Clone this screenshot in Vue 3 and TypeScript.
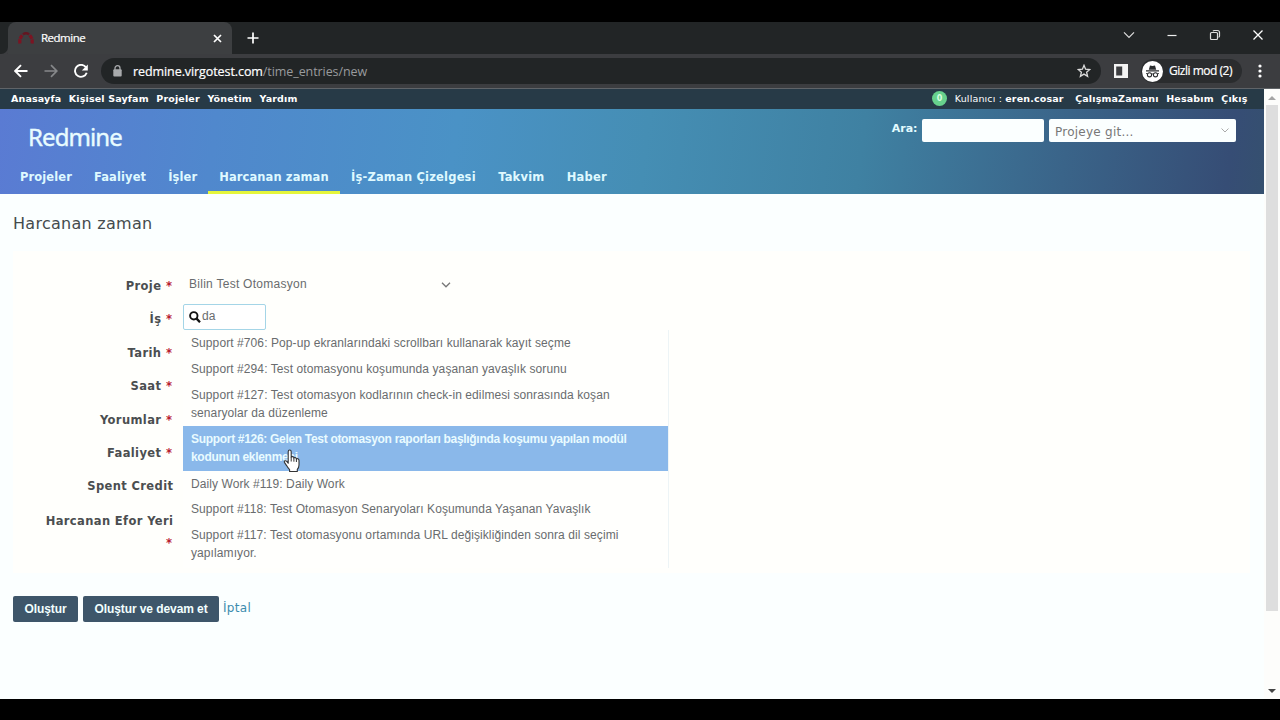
<script setup lang="ts">
interface FormRow {
  label: string
  required: boolean
}

interface Issue {
  id: string
  lines: string[]
  active?: boolean
}

const accountLinks: string[] = ['Anasayfa', 'Kişisel Sayfam', 'Projeler', 'Yönetim', 'Yardım']
const userLinks: string[] = ['ÇalışmaZamanı', 'Hesabım', 'Çıkış']

const tabs: string[] = ['Projeler', 'Faaliyet', 'İşler', 'Harcanan zaman', 'İş-Zaman Çizelgesi', 'Takvim', 'Haber']
const currentTab = 'Harcanan zaman'

const rows: FormRow[] = [
  { label: 'Proje', required: true },
  { label: 'İş', required: true },
  { label: 'Tarih', required: true },
  { label: 'Saat', required: true },
  { label: 'Yorumlar', required: true },
  { label: 'Faaliyet', required: true },
  { label: 'Spent Credit', required: false },
  { label: 'Harcanan Efor Yeri', required: true },
]

const issues: Issue[] = [
  { id: '706', lines: ['Support #706: Pop-up ekranlarındaki scrollbarı kullanarak kayıt seçme'] },
  { id: '294', lines: ['Support #294: Test otomasyonu koşumunda yaşanan yavaşlık sorunu'] },
  { id: '127', lines: ['Support #127: Test otomasyon kodlarının check-in edilmesi sonrasında koşan', 'senaryolar da düzenleme'] },
  { id: '126', lines: ['Support #126: Gelen Test otomasyon raporları başlığında koşumu yapılan modül', 'kodunun eklenmesi'], active: true },
  { id: '119', lines: ['Daily Work #119: Daily Work'] },
  { id: '118', lines: ['Support #118: Test Otomasyon Senaryoları Koşumunda Yaşanan Yavaşlık'] },
  { id: '117', lines: ['Support #117: Test otomasyonu ortamında URL değişikliğinden sonra dil seçimi', 'yapılamıyor.'] },
]
</script>

<template>
  <div class="screen">
    <div class="tabstrip">
      <div class="edge"></div>
      <div class="browser-tab">
        <svg class="favicon" width="16" height="14" viewBox="0 0 16 14">
          <path d="M2 12.5Q1 7 5 3.5M14 12.5Q15 7 11 3.5" fill="none" stroke="#7c1422" stroke-width="3.2" stroke-dasharray="4 .8" />
          <path d="M5 3.3Q8 1.4 11 3.3" fill="none" stroke="#641520" stroke-width="2.5" />
        </svg>
        <span class="tab-title">Redmine</span>
        <svg class="tab-close" width="9" height="9" viewBox="0 0 9 9"><path d="M1 1l7 7M8 1l-7 7" stroke="#fff" stroke-width="1.7" /></svg>
      </div>
      <svg class="new-tab" width="12" height="12" viewBox="0 0 12 12"><path d="M6 .5v11M.5 6h11" stroke="#fff" stroke-width="1.7" /></svg>
      <div class="window-buttons">
        <svg width="12" height="12" viewBox="0 0 12 12"><path d="M1 3.3l5 5 5-5" fill="none" stroke="#ddd" stroke-width="1.2" /></svg>
        <svg width="12" height="12" viewBox="0 0 12 12"><path d="M1.5 6.5h9" stroke="#eee" stroke-width="1.2" /></svg>
        <svg width="12" height="12" viewBox="0 0 12 12"><rect x="1.5" y="3.5" width="7" height="7" rx="1" fill="none" stroke="#ddd" stroke-width="1.2" /><path d="M4 2.2Q4.3 1.5 5.3 1.5H8.5Q10.5 1.5 10.5 3.5V7Q10.5 8 9.5 8.3" fill="none" stroke="#ddd" stroke-width="1.2" /></svg>
        <svg width="12" height="12" viewBox="0 0 12 12"><path d="M1.5 1.5l9 9M10.5 1.5l-9 9" stroke="#fff" stroke-width="1.3" /></svg>
      </div>
    </div>

    <div class="toolbar">
      <svg class="nav" width="14" height="14" viewBox="0 0 14 14"><path d="M13.5 7H1.5M7 1.2L1.2 7 7 12.8" fill="none" stroke="#fff" stroke-width="1.9" /></svg>
      <svg class="nav" width="14" height="14" viewBox="0 0 14 14"><path d="M.5 7h12M7 1.2L12.8 7 7 12.8" fill="none" stroke="#86888a" stroke-width="1.7" /></svg>
      <svg class="nav" width="14" height="14" viewBox="0 0 14 14"><path d="M11.8 3.2A6 6 0 1 0 12.7 8.8" fill="none" stroke="#fff" stroke-width="1.9" /><path d="M13.8.4v6H7.8z" fill="#fff" /></svg>
      <div class="omnibox">
        <svg width="9" height="12" viewBox="0 0 9 12"><path d="M2 5V3.2a2.5 2.5 0 0 1 5 0V5" fill="none" stroke="#a8aaac" stroke-width="1.3" /><rect x=".3" y="4.3" width="8.4" height="7.2" rx="1" fill="#a8aaac" /></svg>
        <span class="url"><span class="host">redmine.virgotest.com</span><span class="path">/time_entries/new</span></span>
        <svg class="star" width="14" height="14" viewBox="0 0 14 14"><path d="M7 1.3l1.6 3.9 4.2.3-3.2 2.7 1 4.1L7 10.1l-3.6 2.2 1-4.1L1.2 5.5l4.2-.3z" fill="none" stroke="#ddd" stroke-width="1.3" /></svg>
      </div>
      <svg class="panel" width="14" height="14" viewBox="0 0 14 14"><path d="M0 0h14v14H0zM2.2 2.5v9h6v-9z" fill="#f4f4f4" fill-rule="evenodd" /></svg>
      <div class="profile">
        <svg width="21" height="21" viewBox="0 0 21 21">
          <circle cx="10.5" cy="10.5" r="10.5" fill="#fff" />
          <path d="M6.8 8.7L8 4.5q2.5.8 5 0l1.2 4.2zM4 9.3h13v1.2H4z" fill="#2b2d2f" />
          <circle cx="7.5" cy="13.8" r="2.1" fill="none" stroke="#2b2d2f" stroke-width="1.1" /><circle cx="13.5" cy="13.8" r="2.1" fill="none" stroke="#2b2d2f" stroke-width="1.1" />
          <path d="M9.5 13.2q1-.6 2 0M4.2 12.5h1M15.8 12.5h1" fill="none" stroke="#2b2d2f" />
        </svg>
        <span>Gizli mod (2)</span>
      </div>
      <svg class="kebab" width="4" height="14" viewBox="0 0 4 14" fill="#fff"><circle cx="2" cy="2" r="1.6" /><circle cx="2" cy="7" r="1.6" /><circle cx="2" cy="12" r="1.6" /></svg>
    </div>

    <div class="viewport">
      <main class="page">
        <div class="top-menu">
          <a v-for="link in accountLinks" :key="link">{{ link }}</a>
          <div class="account">
            <span class="bubble">0</span>
            <span class="logged">Kullanıcı : <b>eren.cosar</b></span>
            <a v-for="link in userLinks" :key="link">{{ link }}</a>
          </div>
        </div>

        <header class="header">
          <div class="header-row">
            <h1>Redmine</h1>
            <div class="search">
              <label>Ara:</label>
              <div class="search-box"></div>
              <div class="jump"><span>Projeye git...</span>
                <svg width="8" height="5" viewBox="0 0 8 5"><path d="M.5.5L4 4 7.5.5" fill="none" stroke="#aaa" /></svg>
              </div>
            </div>
          </div>
          <nav>
            <a v-for="tab in tabs" :key="tab" :class="{ selected: tab === currentTab }"><span>{{ tab }}</span></a>
          </nav>
        </header>

        <section class="content">
          <h2>Harcanan zaman</h2>
          <div class="box">
            <div class="labels">
              <div v-for="row in rows" :key="row.label" class="label-row">
                <span class="caption">{{ row.label }}</span><span v-if="row.required" class="required">*</span>
              </div>
            </div>
            <div class="fields">
              <div class="project"><span>Bilin Test Otomasyon</span>
                <svg width="10" height="6" viewBox="0 0 10 6"><path d="M1 .8l4 4 4-4" fill="none" stroke="#777" stroke-width="1.3" /></svg>
              </div>
              <div class="issue-input">
                <svg width="12" height="12" viewBox="0 0 12 12"><circle cx="4.8" cy="4.8" r="3.7" fill="none" stroke="#111" stroke-width="1.9" /><path d="M7.4 7.4l3.6 3.8" stroke="#111" stroke-width="2.3" /></svg>
                <span>da</span>
              </div>
              <ul class="suggestions">
                <li v-for="issue in issues" :key="issue.id" :class="{ active: issue.active }">
                  <div v-for="line in issue.lines" :key="line">{{ line }}</div>
                </li>
              </ul>
              <svg class="pointer" width="18" height="24" viewBox="0 0 18 24">
                <path d="M5.2 14.2V2.8Q5.2 1 6.7 1T8.2 2.8V8.5Q8.4 7.5 9.6 7.6 10.9 7.8 10.9 9.1 11.2 8.4 12.3 8.6 13.4 8.8 13.4 10 13.9 9.4 14.9 9.7 16 10.1 16 11.4V16Q16 18.7 14.3 20.3V22.5H6.6V20.7Q4.8 18.8 3.6 16.6L1.6 13.6Q.9 12.3 1.9 11.8 2.9 11.4 3.8 12.4z" fill="#fff" stroke="#333" stroke-width="1.1" stroke-linejoin="round" />
                <path d="M8.2 8.5v4M10.9 9.1v3.6M13.4 10v3" stroke="#333" stroke-width="1" />
              </svg>
            </div>
          </div>
          <div class="actions">
            <button class="create">Oluştur</button>
            <button class="continue">Oluştur ve devam et</button>
            <a>İptal</a>
          </div>
        </section>
      </main>
      <aside class="scrollbar">
        <svg width="8" height="4" viewBox="0 0 8 4"><path d="M0 4l4-4 4 4z" fill="#a5a5a5" /></svg>
        <div class="thumb"></div>
        <svg class="down" width="8" height="4" viewBox="0 0 8 4"><path d="M0 0h8L4 4z" fill="#444" /></svg>
      </aside>
    </div>
  </div>
</template>

<style>
body {
  margin: 0;
  background: #000;
}
</style>

<style scoped>
* { box-sizing: border-box; }
svg { display: block; flex: none; }
.screen {
  width: 1280px;
  height: 720px;
  padding: 22px 0 21px;
  background: #000;
  display: flex;
  flex-direction: column;
  overflow: hidden;
  white-space: nowrap;
  font-family: "DejaVu Sans", Verdana, sans-serif;
}
.tabstrip {
  height: 32px;
  flex: none;
  background: #222526;
  display: flex;
  align-items: center;
  color: #fff;
}
.edge { width: 8px; height: 32px; border-bottom-right-radius: 7px; background: #222526; box-shadow: 0 6px 0 #3c3d40; }
.browser-tab {
  width: 224px;
  height: 32px;
  border-radius: 8px 8px 0 0;
  background: #3d3f41;
  display: flex;
  align-items: center;
  padding: 0 10px 0 10px;
}
.tab-title { font: 11.5px/16px "Open Sans", sans-serif; margin-left: 7px; letter-spacing: -.5px; -webkit-text-stroke: .2px; }
.tab-close { margin-left: auto; }
.new-tab { margin-left: 15px; }
.window-buttons { margin-left: auto; display: flex; gap: 31px; padding: 0 16px 6px 0; }
.toolbar {
  height: 35px;
  flex: none;
  background: #3c3d40;
  border-bottom: 1px solid #606468;
  display: flex;
  align-items: center;
  padding: 0 0 0 14px;
}
.nav { margin-right: 16px; }
.omnibox {
  width: 1000px;
  height: 26px;
  margin-left: -3px;
  border-radius: 13px;
  background: #222526;
  display: flex;
  align-items: center;
  padding: 0 10px 0 12px;
}
.url { margin-left: 11px; font: 12.5px/20px "Open Sans", sans-serif; letter-spacing: -.08px; padding-top: 1px; }
.host { color: #fff; -webkit-text-stroke: .2px; }
.path { color: #999b9d; }
.star { margin-left: auto; }
.panel { margin-left: 13px; }
.profile {
  margin-left: 13px;
  width: 101px;
  height: 24px;
  border-radius: 12px;
  background: #2a2c2e;
  color: #fff;
  display: flex;
  align-items: center;
  padding-left: 1px;
  font: 12px/20px "Open Sans", sans-serif;
}
.profile span { margin-left: 6px; letter-spacing: -.48px; -webkit-text-stroke: .2px; }
.kebab { margin-left: 16px; }
.viewport { flex: 1; display: flex; background: #fbffff; min-height: 0; }
.page { width: 1264px; }
.top-menu {
  height: 20px;
  background: #273a47;
  color: #fff;
  display: flex;
  align-items: center;
  padding: 0 16.5px 2px 11px;
  gap: 7.6px;
  font-size: 9.5px;
  font-weight: bold;
  letter-spacing: .15px;
}
.account { margin-left: auto; display: flex; align-items: center; gap: 7.6px; }
.bubble {
  width: 15px;
  height: 15px;
  border-radius: 50%;
  background: #67d18d;
  color: #d6ffe2;
  line-height: 15px;
  text-align: center;
  font-size: 8px;
}
.logged { font-weight: normal; margin-right: 4px; }
.header {
  height: 85px;
  background: linear-gradient(97deg, #5a7bd3 0%, #5088cd 17%, #4a92c6 36%, #458eb4 51%, #3f81a2 68%, #3a6489 84%, #364d75 97%, #35506f 100%);
  display: flex;
  flex-direction: column;
  justify-content: space-between;
}
.header-row { display: flex; justify-content: space-between; }
h1 {
  margin: 12px 0 0 28px;
  font: 24px/32px "Noto Sans", sans-serif;
  color: #e8fcff;
  letter-spacing: -.9px;
  -webkit-text-stroke: .4px;
}
.search { display: flex; padding: 10px 28px 0 0; }
.search label { color: #e2fbff; font-weight: bold; font-size: 11px; line-height: 20px; margin-right: 4.5px; }
.search-box { width: 122px; height: 23px; background: #fbffff; border-radius: 2px; margin-right: 5px; }
.jump {
  width: 187px;
  height: 23px;
  background: #fbffff;
  border-radius: 2px;
  color: #777;
  font-size: 12px;
  letter-spacing: .25px;
  display: flex;
  align-items: center;
  justify-content: space-between;
  padding: 0 7px 0 6px;
}
.jump span { padding-top: 3px; }
nav { display: flex; height: 34px; padding-left: 9px; }
nav a {
  height: 34px;
  padding: 0 11px;
  color: #dff9ff;
  font-size: 11.5px;
  font-weight: bold;
  letter-spacing: .1px;
  line-height: 34px;
  border-bottom: 3px solid transparent;
}
nav a.selected { border-color: #e5f63b; }
nav a.selected ~ a { padding: 0 11.2px; letter-spacing: .18px; }
.content { padding: 0 14px 0 13px; }
h2 { margin: 17px 0 0; font-weight: normal; font-size: 16px; line-height: 26px; letter-spacing: .28px; color: #444b4d; }
.box { margin-top: 14px; height: 322px; background: #fffffc; display: flex; }
.labels { width: 160px; padding-top: 19px; text-align: right; color: #4b4e50; font-weight: bold; font-size: 11.5px; }
.label-row { height: 33.4px; line-height: 33px; }
.caption { letter-spacing: .38px; margin-right: -.38px; }
.label-row:last-child { line-height: 22px; padding-top: 6px; }
.label-row:last-child .caption, .label-row:last-child .required { display: block; }
.label-row:last-child .required { margin-left: auto; }
.required { color: #b82030; margin-left: 5px; display: inline-block; width: 7px; text-align: left; }
.fields { position: relative; margin-left: 10px; padding-top: 22px; color: #696c6e; font-family: "Liberation Sans", Arial, sans-serif; font-size: 12px; }
.project { width: 268px; height: 24px; display: flex; align-items: center; justify-content: space-between; padding-left: 6px; letter-spacing: .27px; }
.project span { padding-bottom: 2px; }
.project svg { margin-bottom: 1px; }
.issue-input { width: 83px; height: 26px; margin-top: 7px; border: 1px solid #a4d5e7; border-radius: 2px; background: #fff; display: flex; align-items: center; padding-left: 5px; gap: 1px; }
.issue-input span { padding-bottom: 2px; }
.suggestions {
  position: absolute;
  top: 79.3px;
  left: 0;
  width: 486px;
  height: 238px;
  margin: 0;
  padding: 0;
  list-style: none;
  background: #fffffd;
  border-right: 1px solid #edf4f6;
}
li { padding: 3.9px 8px; line-height: 18px; letter-spacing: .09px; }
li.active { background: #8ab8ea; color: #e9fbff; font-weight: bold; padding: 4px 8px 5px; letter-spacing: -.31px; }
.pointer { position: absolute; left: 100px; top: 198px; }
.actions { display: flex; margin-top: 23px; gap: 5px; }
button {
  height: 26px;
  border: 0;
  border-radius: 2px;
  background: #3e566a;
  color: #f2ffff;
  font: bold 12px/26px "Liberation Sans", Arial, sans-serif;
  letter-spacing: -.08px;
  padding: 0 0 1px;
}
.create { width: 65px; }
.continue { width: 136px; }
.actions a { color: #3c8cae; font-size: 12px; line-height: 24px; letter-spacing: .3px; margin-left: -1px; }
.scrollbar { width: 16px; background: #fdfdfb; display: flex; flex-direction: column; align-items: center; padding: 7px 0 6px; }
.thumb { width: 12px; height: 506px; margin-top: 5px; background: #dedede; }
.down { margin-top: auto; }
</style>
